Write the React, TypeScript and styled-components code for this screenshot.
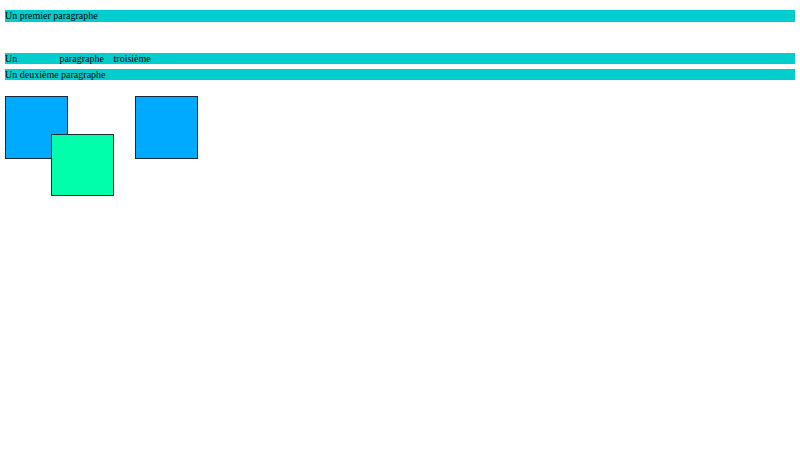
import React from "react";
import styled, { createGlobalStyle } from "styled-components";

const Global = createGlobalStyle`
  html, body { margin: 0; padding: 0; background: #ffffff; }
  html, body, #root { min-height: 100vh; }
  body { font-family: "Liberation Serif", "Times New Roman", serif; font-size: 10px; color: #000; }
`;

const Page = styled.div`
  display: flex;
  flex-direction: column;
  padding: 10px 5px 60px 5px;
`;

const Para = styled.p<{ $gap?: number }>`
  margin: ${(p) => p.$gap ?? 0}px 0 0 0;
  background: #00cdcd;
  line-height: 11.5px;
  height: 11.5px;
  white-space: nowrap;
`;

const Spacer = styled.span<{ $w: number }>`
  display: inline-block;
  width: ${(p) => p.$w}px;
`;

const Shifted = styled.span`
  margin-left: 9.7px;
`;

const Squares = styled.div`
  display: flex;
  gap: 2.5px;
  margin-top: 16px;
  align-items: flex-start;
`;

const Square = styled.div<{ $color: string; $over?: boolean }>`
  box-sizing: border-box;
  flex: 0 0 auto;
  width: 62.5px;
  height: 62.5px;
  background: ${(p) => p.$color};
  border: 1px solid #1a2a3a;
  ${(p) => (p.$over ? "position: relative; top: 37.5px; left: -18.75px; z-index: 1;" : "")}
`;

export default function App() {
  return (
    <>
      <Global />
      <Page>
        <Para>Un premier paragraphe</Para>
        <Para $gap={31}>
          Un <Spacer $w={37.2} /> paragraphe<Shifted>troisième</Shifted>
        </Para>
        <Para $gap={4.5}>Un deuxième paragraphe</Para>
        <Squares>
          <Square $color="#00aaff" />
          <Square $color="#00ffaa" $over />
          <Square $color="#00aaff" />
        </Squares>
      </Page>
    </>
  );
}
